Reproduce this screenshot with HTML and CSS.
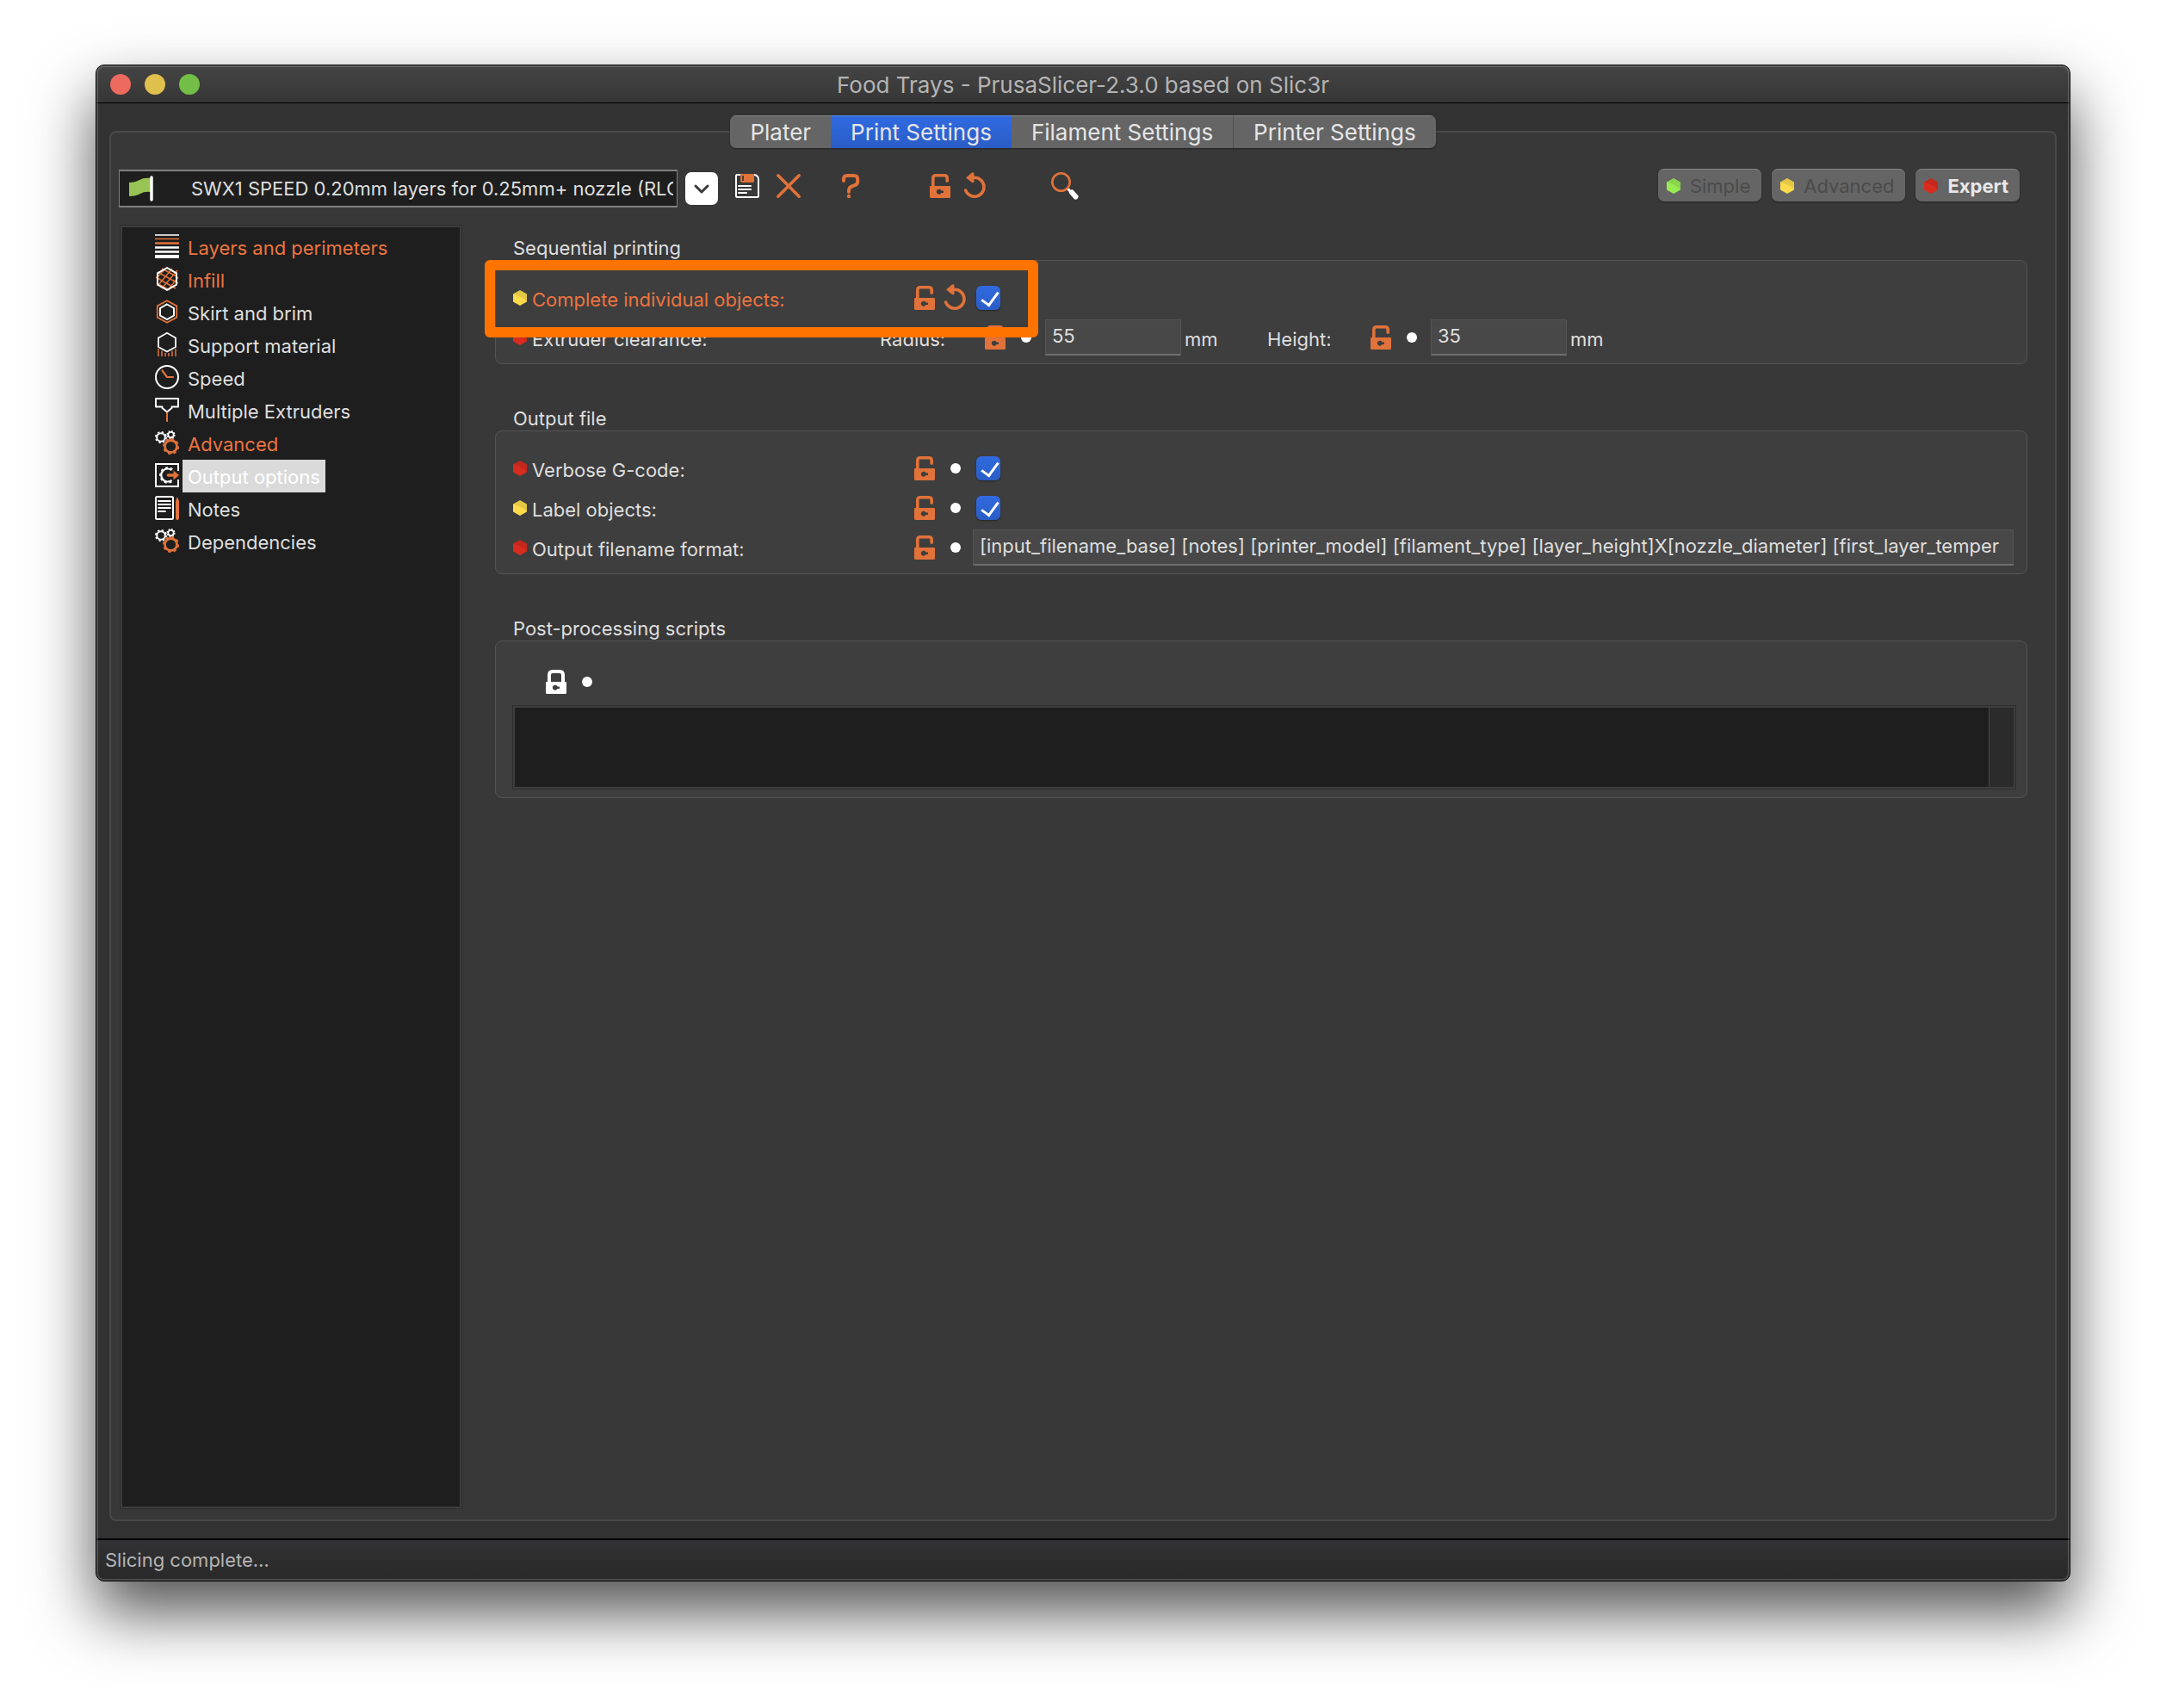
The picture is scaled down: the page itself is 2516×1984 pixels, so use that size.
FILE: index.html
```html
<!DOCTYPE html>
<html lang="en">

<head>
  <meta charset="UTF-8">
  <meta name="viewport" content="width=device-width, initial-scale=1.0">
  <title>Food Trays - PrusaSlicer-2.3.0 based on Slic3r</title>
  <link rel="stylesheet" href="styles.css">
</head>

<body>
  <!-- shared icons -->
  <svg class="sprite" aria-hidden="true">
    <symbol id="lock-open" viewBox="0 0 32 32">
      <path d="M7.8 18V7Q7.8 3.8 11 3.8H21Q24.2 3.8 24.2 7V10.2" fill="none" stroke="currentColor" stroke-width="3.6" stroke-linecap="round" />
      <path fill="currentColor" fill-rule="evenodd" d="M5 16H27Q28 16 28 17V28.500Q28 30 26.500 30H5.500Q4 30 4 28.500V17Q4 16 5 16ZM17.500 21.500A3 3 0 1 0 17.500 24H20V21.500Z" />
    </symbol>
    <symbol id="lock-closed" viewBox="0 0 32 32">
      <path d="M8 18V8Q8 4 12 4H20Q24 4 24 8V18" fill="none" stroke="currentColor" stroke-width="4" />
      <path fill="currentColor" fill-rule="evenodd" d="M5 16H27Q28 16 28 17V28.500Q28 30 26.500 30H5.500Q4 30 4 28.500V17Q4 16 5 16ZM17.500 21.500A3 3 0 1 0 17.500 24H20V21.500Z" />
    </symbol>
    <symbol id="undo" viewBox="0 0 32 32">
      <path d="M14 6.300H15A11 11 0 1 1 4.600 21" fill="none" stroke="currentColor" stroke-width="3.600" stroke-linecap="round" />
      <path d="M5 6.500L12 .500Q14.500 -.500 14.500 2V11Q14.500 13 12 12Z" fill="currentColor" />
    </symbol>
    <symbol id="dot" viewBox="0 0 32 32">
      <circle cx="16" cy="16" r="6" fill="#fff" />
    </symbol>
    <symbol id="hex" viewBox="0 0 16 18">
      <path d="M8 0L16 4.500V13.500L8 18L0 13.500V4.500Z" fill="currentColor" />
      <path d="M8 0L16 4.500V13.500Q12 8 0 4.500Z" fill="#000" opacity=".09" />
    </symbol>
    <symbol id="gears" viewBox="0 0 28 28">
      <g fill="none">
        <g stroke="#fff">
          <circle cx="7" cy="8" r="4.800" stroke-width="2" />
          <circle cx="7" cy="8" r="6.200" stroke-width="1.600" stroke-dasharray="2.400 2.470" />
          <circle cx="18.500" cy="5" r="3.200" stroke-width="1.800" />
          <circle cx="18.500" cy="5" r="4.400" stroke-width="1.400" stroke-dasharray="1.700 1.756" />
        </g>
        <g stroke="#e0723a">
          <circle cx="18.500" cy="18.500" r="7" stroke-width="2.800" />
          <circle cx="18.500" cy="18.500" r="8.800" stroke-width="1.600" stroke-dasharray="3.400 3.512" />
        </g>
      </g>
    </symbol>
  </svg>

  <div class="window">
    <header class="titlebar">
      <div class="lights">
        <span class="light light-close"></span>
        <span class="light light-min"></span>
        <span class="light light-zoom"></span>
      </div>
      <h1>Food Trays - PrusaSlicer-2.3.0 based on Slic3r</h1>
    </header>

    <main class="content">
      <div class="panel">
        <nav class="tabs">
          <button type="button">Plater</button>
          <button type="button" class="active">Print Settings</button>
          <button type="button">Filament Settings</button>
          <button type="button">Printer Settings</button>
        </nav>

        <div class="toolbar">
          <div class="preset">
            <svg class="flag" viewBox="0 0 32 32">
              <path d="M1 9Q8 9 13 6T26 4V20Q19 19 14 22T1 25Z" fill="#97c455" />
              <path d="M27 3V29" stroke="#fff" stroke-width="3.500" stroke-linecap="round" />
            </svg>
            <select id="preset" aria-label="Print preset">
              <option>SWX1 SPEED 0.20mm layers for 0.25mm+ nozzle (RLC)</option>
            </select>
          </div>
          <button type="button" class="preset-open" aria-label="Show presets">
            <svg viewBox="0 0 38 38"><path d="M12 16L19 23L26 16" fill="none" stroke="#3a3a3a" stroke-width="3" stroke-linecap="round" stroke-linejoin="round" /></svg>
          </button>

          <div class="tools">
            <button type="button" class="icon-btn" aria-label="Save preset">
              <svg viewBox="0 0 32 32">
                <path d="M8 3H4.500Q3 3 3 4.500V27.500Q3 29 4.500 29H27.500Q29 29 29 27.500V8Q28.500 3.500 24 3" fill="none" stroke="#fff" stroke-width="2" />
                <path d="M8 2H24V10Q24 12 22 12H10Q8 12 8 10Z" fill="currentColor" />
                <path d="M11 4V10" stroke="#383838" stroke-width="1.800" />
                <path d="M6 16H20M6 20H20M6 24H15" stroke="#fff" stroke-width="2" stroke-linecap="round" />
              </svg>
            </button>
            <button type="button" class="icon-btn icon-delete" aria-label="Delete preset">
              <svg viewBox="0 0 32 32"><path d="M3.800 3.800L28.200 28.200M28.200 3.800L3.800 28.200" stroke="currentColor" stroke-width="3.600" stroke-linecap="round" /></svg>
            </button>
            <button type="button" class="icon-btn icon-help" aria-label="Help">
              <svg viewBox="0 0 32 32">
                <path d="M8 10V8Q8 4 12 4H20Q24.200 4 24.200 8V11Q24.200 14.500 20 15.500Q14 17 14 21V23" fill="none" stroke="currentColor" stroke-width="4" stroke-linecap="round" />
                <circle cx="14" cy="28" r="2.200" fill="currentColor" />
              </svg>
            </button>
            <button type="button" class="icon-btn icon-lock" aria-label="Reset to system values"><svg><use href="#lock-open" /></svg></button>
            <button type="button" class="icon-btn icon-undo" aria-label="Undo changes"><svg><use href="#undo" /></svg></button>
            <button type="button" class="icon-btn icon-search" aria-label="Search">
              <svg viewBox="0 0 32 32">
                <circle cx="11.500" cy="11.500" r="10.200" fill="none" stroke="currentColor" stroke-width="2.600" />
                <path d="M19.500 19.500L23 23" stroke="#fff" stroke-width="3" />
                <path d="M24 23.500L28.500 28.500" stroke="#fff" stroke-width="6" stroke-linecap="round" />
              </svg>
            </button>
          </div>

          <div class="modes">
            <button type="button"><svg class="hex green"><use href="#hex" /></svg>Simple</button>
            <button type="button"><svg class="hex yellow"><use href="#hex" /></svg>Advanced</button>
            <button type="button" class="active"><svg class="hex red"><use href="#hex" /></svg>Expert</button>
          </div>
        </div>

        <div class="columns">
          <ul class="sidebar">
            <li>
              <svg viewBox="0 0 28 28">
                <path d="M0 1H28" stroke="#ccc" stroke-width="2" />
                <path d="M0 5.500H28" stroke="#e0723a" stroke-width="1.500" />
                <path d="M0 10.500H28" stroke="#e0723a" stroke-width="2.500" />
                <path d="M0 15.500H28M0 20.500H28" stroke="#fff" stroke-width="2.600" />
                <path d="M0 26H28" stroke="#fff" stroke-width="4" />
              </svg>
              <a href="#" class="changed">Layers and perimeters</a>
            </li>
            <li>
              <svg viewBox="0 0 28 28">
                <path d="M8 2L25 11M3 6L27 19M1 12L24 25M2 19L17 27M20 2L4 21M26 4L8 25M27 12L15 27M12 2L2 13" stroke="#e0723a" stroke-width="1.500" />
                <path d="M14 1.200L25 7.400V20.600L14 26.800L3 20.600V7.400Z" fill="none" stroke="#fff" stroke-width="2" />
              </svg>
              <a href="#" class="changed">Infill</a>
            </li>
            <li>
              <svg viewBox="0 0 28 28">
                <path d="M14 1.200L25.200 7.400V20.600L14 26.800L2.800 20.600V7.400Z" fill="none" stroke="#e0723a" stroke-width="1.800" />
                <path d="M14 5.500L22 10V18.500L14 23L6 18.500V10Z" fill="none" stroke="#fff" stroke-width="2" />
              </svg>
              <a href="#">Skirt and brim</a>
            </li>
            <li>
              <svg viewBox="0 0 28 28">
                <path d="M4 19V28M8 21.500V28M12 24V28M16 24V28M20 21.500V28M24 19V28" stroke="#c0683a" stroke-width="1.800" />
                <path d="M14 .800L24 6.500V17L14 22.500L4 17V6.500Z" fill="none" stroke="#fff" stroke-width="1.800" />
              </svg>
              <a href="#">Support material</a>
            </li>
            <li>
              <svg viewBox="0 0 28 28">
                <circle cx="14" cy="14" r="13" fill="none" stroke="#fff" stroke-width="2" />
                <path d="M8.500 6.500L14 14H21" fill="none" stroke="#e0723a" stroke-width="2.200" stroke-linecap="round" />
              </svg>
              <a href="#">Speed</a>
            </li>
            <li>
              <svg viewBox="0 0 28 28">
                <path d="M1 1H27V10.500H19.500V12L14 16.500L8.500 12V10.500H1Z" fill="none" stroke="#fff" stroke-width="2" stroke-linejoin="round" />
                <path d="M14 17V28" stroke="#e0723a" stroke-width="2" />
              </svg>
              <a href="#">Multiple Extruders</a>
            </li>
            <li><svg><use href="#gears" /></svg><a href="#" class="changed">Advanced</a></li>
            <li>
              <svg viewBox="0 0 28 28">
                <path d="M27 9V1H1V27H27V19" fill="none" stroke="#fff" stroke-width="2" />
                <path d="M19.500 8.200A7.500 7.500 0 1 0 19.500 19.800" fill="none" stroke="#fff" stroke-width="2.200" />
                <path d="M20.500 7A9 9 0 1 0 20.500 21" fill="none" stroke="#fff" stroke-width="1.500" stroke-dasharray="3 3" />
                <path d="M15.500 14H23" stroke="#e0723a" stroke-width="3.600" stroke-linecap="round" />
                <path d="M21.500 8.500L28 14L21.500 19.500Z" fill="#e0723a" />
              </svg>
              <a href="#" class="selected">Output options</a>
            </li>
            <li>
              <svg viewBox="0 0 28 28">
                <rect x="1" y="1" width="20" height="26" rx="1.500" fill="none" stroke="#fff" stroke-width="2" />
                <path d="M4 6H18M4 10H18M4 14H18M4 18H12" stroke="#fff" stroke-width="1.800" stroke-linecap="round" />
                <path d="M24 6L26 1L28 6V26Q28 28 26 28T24 26Z" fill="#e0723a" />
              </svg>
              <a href="#">Notes</a>
            </li>
            <li><svg><use href="#gears" /></svg><a href="#">Dependencies</a></li>
          </ul>

          <div class="settings">
            <section>
              <h2>Sequential printing</h2>
              <div class="group">
                <div class="row">
                  <svg class="hex yellow"><use href="#hex" /></svg>
                  <label class="name changed" for="complete">Complete individual objects:</label>
                  <svg class="state"><use href="#lock-open" /></svg>
                  <svg class="state"><use href="#undo" /></svg>
                  <input type="checkbox" id="complete" checked>
                </div>
                <div class="row">
                  <svg class="hex red"><use href="#hex" /></svg>
                  <span class="name name-short">Extruder clearance:</span>
                  <label class="sub sub-radius" for="radius">Radius:</label>
                  <svg class="state"><use href="#lock-open" /></svg>
                  <svg class="state"><use href="#dot" /></svg>
                  <input type="text" class="number" id="radius" value="55">
                  <span class="unit">mm</span>
                  <label class="sub sub-height" for="height">Height:</label>
                  <svg class="state"><use href="#lock-open" /></svg>
                  <svg class="state"><use href="#dot" /></svg>
                  <input type="text" class="number" id="height" value="35">
                  <span class="unit">mm</span>
                </div>
                <div class="callout"></div>
              </div>
            </section>

            <section>
              <h2>Output file</h2>
              <div class="group">
                <div class="row">
                  <svg class="hex red"><use href="#hex" /></svg>
                  <label class="name" for="verbose">Verbose G-code:</label>
                  <svg class="state"><use href="#lock-open" /></svg>
                  <svg class="state"><use href="#dot" /></svg>
                  <input type="checkbox" id="verbose" checked>
                </div>
                <div class="row">
                  <svg class="hex yellow"><use href="#hex" /></svg>
                  <label class="name" for="labels">Label objects:</label>
                  <svg class="state"><use href="#lock-open" /></svg>
                  <svg class="state"><use href="#dot" /></svg>
                  <input type="checkbox" id="labels" checked>
                </div>
                <div class="row">
                  <svg class="hex red"><use href="#hex" /></svg>
                  <label class="name" for="format">Output filename format:</label>
                  <svg class="state"><use href="#lock-open" /></svg>
                  <svg class="state"><use href="#dot" /></svg>
                  <input type="text" class="format" id="format" value="[input_filename_base] [notes] [printer_model] [filament_type] [layer_height]X[nozzle_diameter] [first_layer_temper">
                </div>
              </div>
            </section>

            <section>
              <h2>Post-processing scripts</h2>
              <div class="group group-scripts">
                <div class="row">
                  <svg class="state system"><use href="#lock-closed" /></svg>
                  <svg class="state"><use href="#dot" /></svg>
                </div>
                <div class="script-box">
                  <textarea aria-label="Post-processing scripts"></textarea>
                  <div class="scrollbar"></div>
                </div>
              </div>
            </section>
          </div>
        </div>
      </div>
    </main>

    <footer class="statusbar">Slicing complete…</footer>
  </div>
</body>

</html>
```
FILE: styles.css
```css
* {
  box-sizing: border-box;
}

body {
  display: flex;
  min-height: 100vh;
  margin: 0;
  padding: 75px 111px 147px;
  background: #fff;
  color: #dfdfdf;
  font-family: Inter, "Liberation Sans", sans-serif;
  font-size: 22px;
  line-height: 32px;
}

button,
input,
select,
textarea {
  margin: 0;
  padding: 0;
  border: 0;
  color: inherit;
  font: inherit;
}

h1,
h2,
ul {
  margin: 0;
  padding: 0;
  font-size: inherit;
  font-weight: normal;
  list-style: none;
}

svg {
  flex: none;
  display: block;
}

.sprite {
  position: absolute;
  width: 0;
  height: 0;
}

.window {
  position: relative;
  flex: 1;
  display: flex;
  flex-direction: column;
  min-width: 0;
  border: 1px solid #000;
  border-radius: 10px;
  background: #323232;
  box-shadow: 0 36px 72px rgba(0, 0, 0, 0.68);
  overflow: hidden;
}

/* light rim on the inside of the window edge */
.window::after {
  content: "";
  position: absolute;
  inset: 0;
  border: 2px solid rgba(255, 255, 255, 0.17);
  border-radius: 9px;
  pointer-events: none;
}

.titlebar {
  display: flex;
  align-items: center;
  height: 44px;
  padding: 0 16px;
  border-bottom: 1px solid #000;
  background: linear-gradient(#444, #363636);
  color: #b4b4b4;
}

.titlebar h1 {
  flex: 1;
  margin-right: 104px;
  padding-top: 2px;
  font-size: 26px;
  text-align: center;
}

.lights {
  display: flex;
  gap: 16px;
  width: 104px;
}

.light {
  width: 24px;
  height: 24px;
  border-radius: 50%;
}

.light-close {
  background: #ed6a5e;
}

.light-min {
  background: #e0c04c;
}

.light-zoom {
  background: #72be47;
}

.content {
  flex: 1;
  display: flex;
  padding: 32px 15px 20px;
}

.panel {
  flex: 1;
  display: flex;
  flex-direction: column;
  min-width: 0;
  border: 2px solid #494949;
  border-radius: 8px;
  background: #383838;
}

/* tabs */
.tabs {
  display: flex;
  align-self: center;
  margin-top: -20px;
  border-radius: 7px;
  box-shadow: 0 1px 2px rgba(0, 0, 0, 0.4);
  overflow: hidden;
}

.tabs button {
  height: 38px;
  padding: 0 23px;
  border-top: 1px solid #858585;
  background: #656565;
  color: #e6e6e6;
  font-size: 26px;
  line-height: 35px;
}

.tabs button:last-child {
  border-left: 1px solid #525252;
}

.tabs .active {
  border-color: #5c88e6;
  background: linear-gradient(#306ae0, #2a5dc6);
}

/* toolbar */
.toolbar {
  display: flex;
  align-items: center;
  margin: 25px 41px 0 9px;
}

.preset {
  position: relative;
  width: 649px;
}

.preset select {
  display: block;
  width: 100%;
  height: 44px;
  padding: 0 4px 0 83px;
  border: 2px solid #808080;
  border-width: 2px 1px;
  border-radius: 0;
  background: #1e1e1e;
  appearance: none;
}

.flag {
  position: absolute;
  top: 6px;
  left: 11px;
  width: 32px;
  height: 32px;
}

.preset-open {
  width: 38px;
  height: 38px;
  margin-left: 9px;
  border-radius: 7px;
  background: #fff;
}

.tools {
  display: flex;
  margin: 0 0 6px 18px;
  color: #e0723a;
}

.icon-btn {
  width: 32px;
  height: 32px;
  background: none;
}

.icon-btn svg {
  width: 32px;
  height: 32px;
}

.icon-delete {
  margin-left: 16px;
}

.icon-help {
  margin-left: 40px;
}

.icon-lock,
.icon-search {
  margin-left: 72px;
}

.icon-undo {
  margin-left: 9px;
}

.modes {
  display: flex;
  gap: 12px;
  margin: -2px 0 6px auto;
}

.modes button {
  display: flex;
  align-items: center;
  gap: 11px;
  height: 38px;
  padding: 0 13px 0 10px;
  border-top: 1px solid #858585;
  border-radius: 7px;
  background: #656565;
  box-shadow: 0 1px 2px rgba(0, 0, 0, 0.4);
  color: #4b4b4b;
}

.modes .active {
  color: #e8e8e8;
  font-weight: bold;
}

.hex {
  width: 16px;
  height: 18px;
}

.green {
  color: #98ec52;
}

.yellow {
  color: #fbdb4c;
}

.red {
  color: #d82c20;
}

.columns {
  flex: 1;
  display: flex;
  gap: 38px;
  margin: 20px 32px 12px 10px;
}

/* settings pages */
.sidebar {
  flex: none;
  width: 398px;
  padding: 6px 40px;
  border: 1px solid #2d2d2d;
  outline: 2px solid #3c3c3c;
  outline-offset: -3px;
  background: #1e1e1e;
}

.sidebar li {
  display: flex;
  align-items: center;
  gap: 4px;
  height: 38px;
}

.sidebar svg {
  width: 28px;
  height: 28px;
  margin-bottom: 2px;
}

.sidebar a {
  padding: 2px 6px 0;
  color: inherit;
  line-height: 36px;
  text-decoration: none;
}

.sidebar .selected {
  background: #dadada;
  color: #fff;
}

.changed,
.sidebar .changed {
  color: #ec7440;
}

/* option groups */
.settings {
  flex: 1;
  min-width: 0;
  padding-top: 9px;
}

.settings section {
  margin-bottom: 45px;
}

.settings h2 {
  padding: 4px 0 0 21px;
  line-height: 28px;
}

.group {
  position: relative;
  padding: 20px 15px 7px 20px;
  border: 1px solid #545454;
  border-radius: 8px;
  background: #3e3e3e;
}

.row {
  display: flex;
  align-items: center;
  height: 46px;
}

.name {
  width: 440px;
  margin-left: 6px;
}

.name-short {
  width: 404px;
}

.name,
.sub,
.unit {
  padding-top: 3px;
}

.sub-radius {
  width: 118px;
}

.sub-height {
  width: 116px;
}

.state {
  width: 32px;
  height: 32px;
  margin-right: 4px;
  color: #e0723a;
}

.system {
  color: #fff;
}

.row input[type="checkbox"] {
  width: 28px;
  height: 28px;
  margin-left: 4px;
  border-radius: 6px;
  background: linear-gradient(#306ae0, #2a5dc6);
  box-shadow: 0 1px 2px rgba(0, 0, 0, 0.4);
  appearance: none;
}

/* tick */
.row input[type="checkbox"]::before {
  content: "";
  display: block;
  width: 9px;
  height: 17px;
  margin: 3px 0 0 10px;
  border: solid #fff;
  border-width: 0 3px 3px 0;
  transform: rotate(36deg);
}

.row input[type="text"] {
  height: 42px;
  padding: 0 4px 4px 7px;
  border: 1px solid #555;
  border-bottom: 2px solid #6e6e6e;
  background: #484848;
}

.row .number {
  width: 158px;
  margin-left: 2px;
}

.row .format {
  flex: 1;
  min-width: 0;
}

.unit {
  width: 96px;
  margin-left: 4px;
}

/* marks the option being explained */
.callout {
  position: absolute;
  top: -1px;
  left: -13px;
  width: 643px;
  height: 90px;
  border: 12px solid #ff7300;
  border-radius: 6px;
}

.group-scripts {
  padding: 24px 12px 9px 19px;
}

.group-scripts .row {
  padding-left: 35px;
}

.script-box {
  display: flex;
  margin-top: 4px;
  padding: 2px;
  border: 1px solid #2d2d2d;
}

.script-box textarea {
  flex: 1;
  height: 92px;
  background: #1e1e1e;
  resize: none;
}

.scrollbar {
  width: 29px;
  border-left: 1px solid #454545;
  background: #2b2b2b;
}

.statusbar {
  height: 49px;
  padding: 7px 10px 0;
  border-top: 2px solid #000;
  background: linear-gradient(#323234, #292929);
  color: #b4b4b4;
}
```
